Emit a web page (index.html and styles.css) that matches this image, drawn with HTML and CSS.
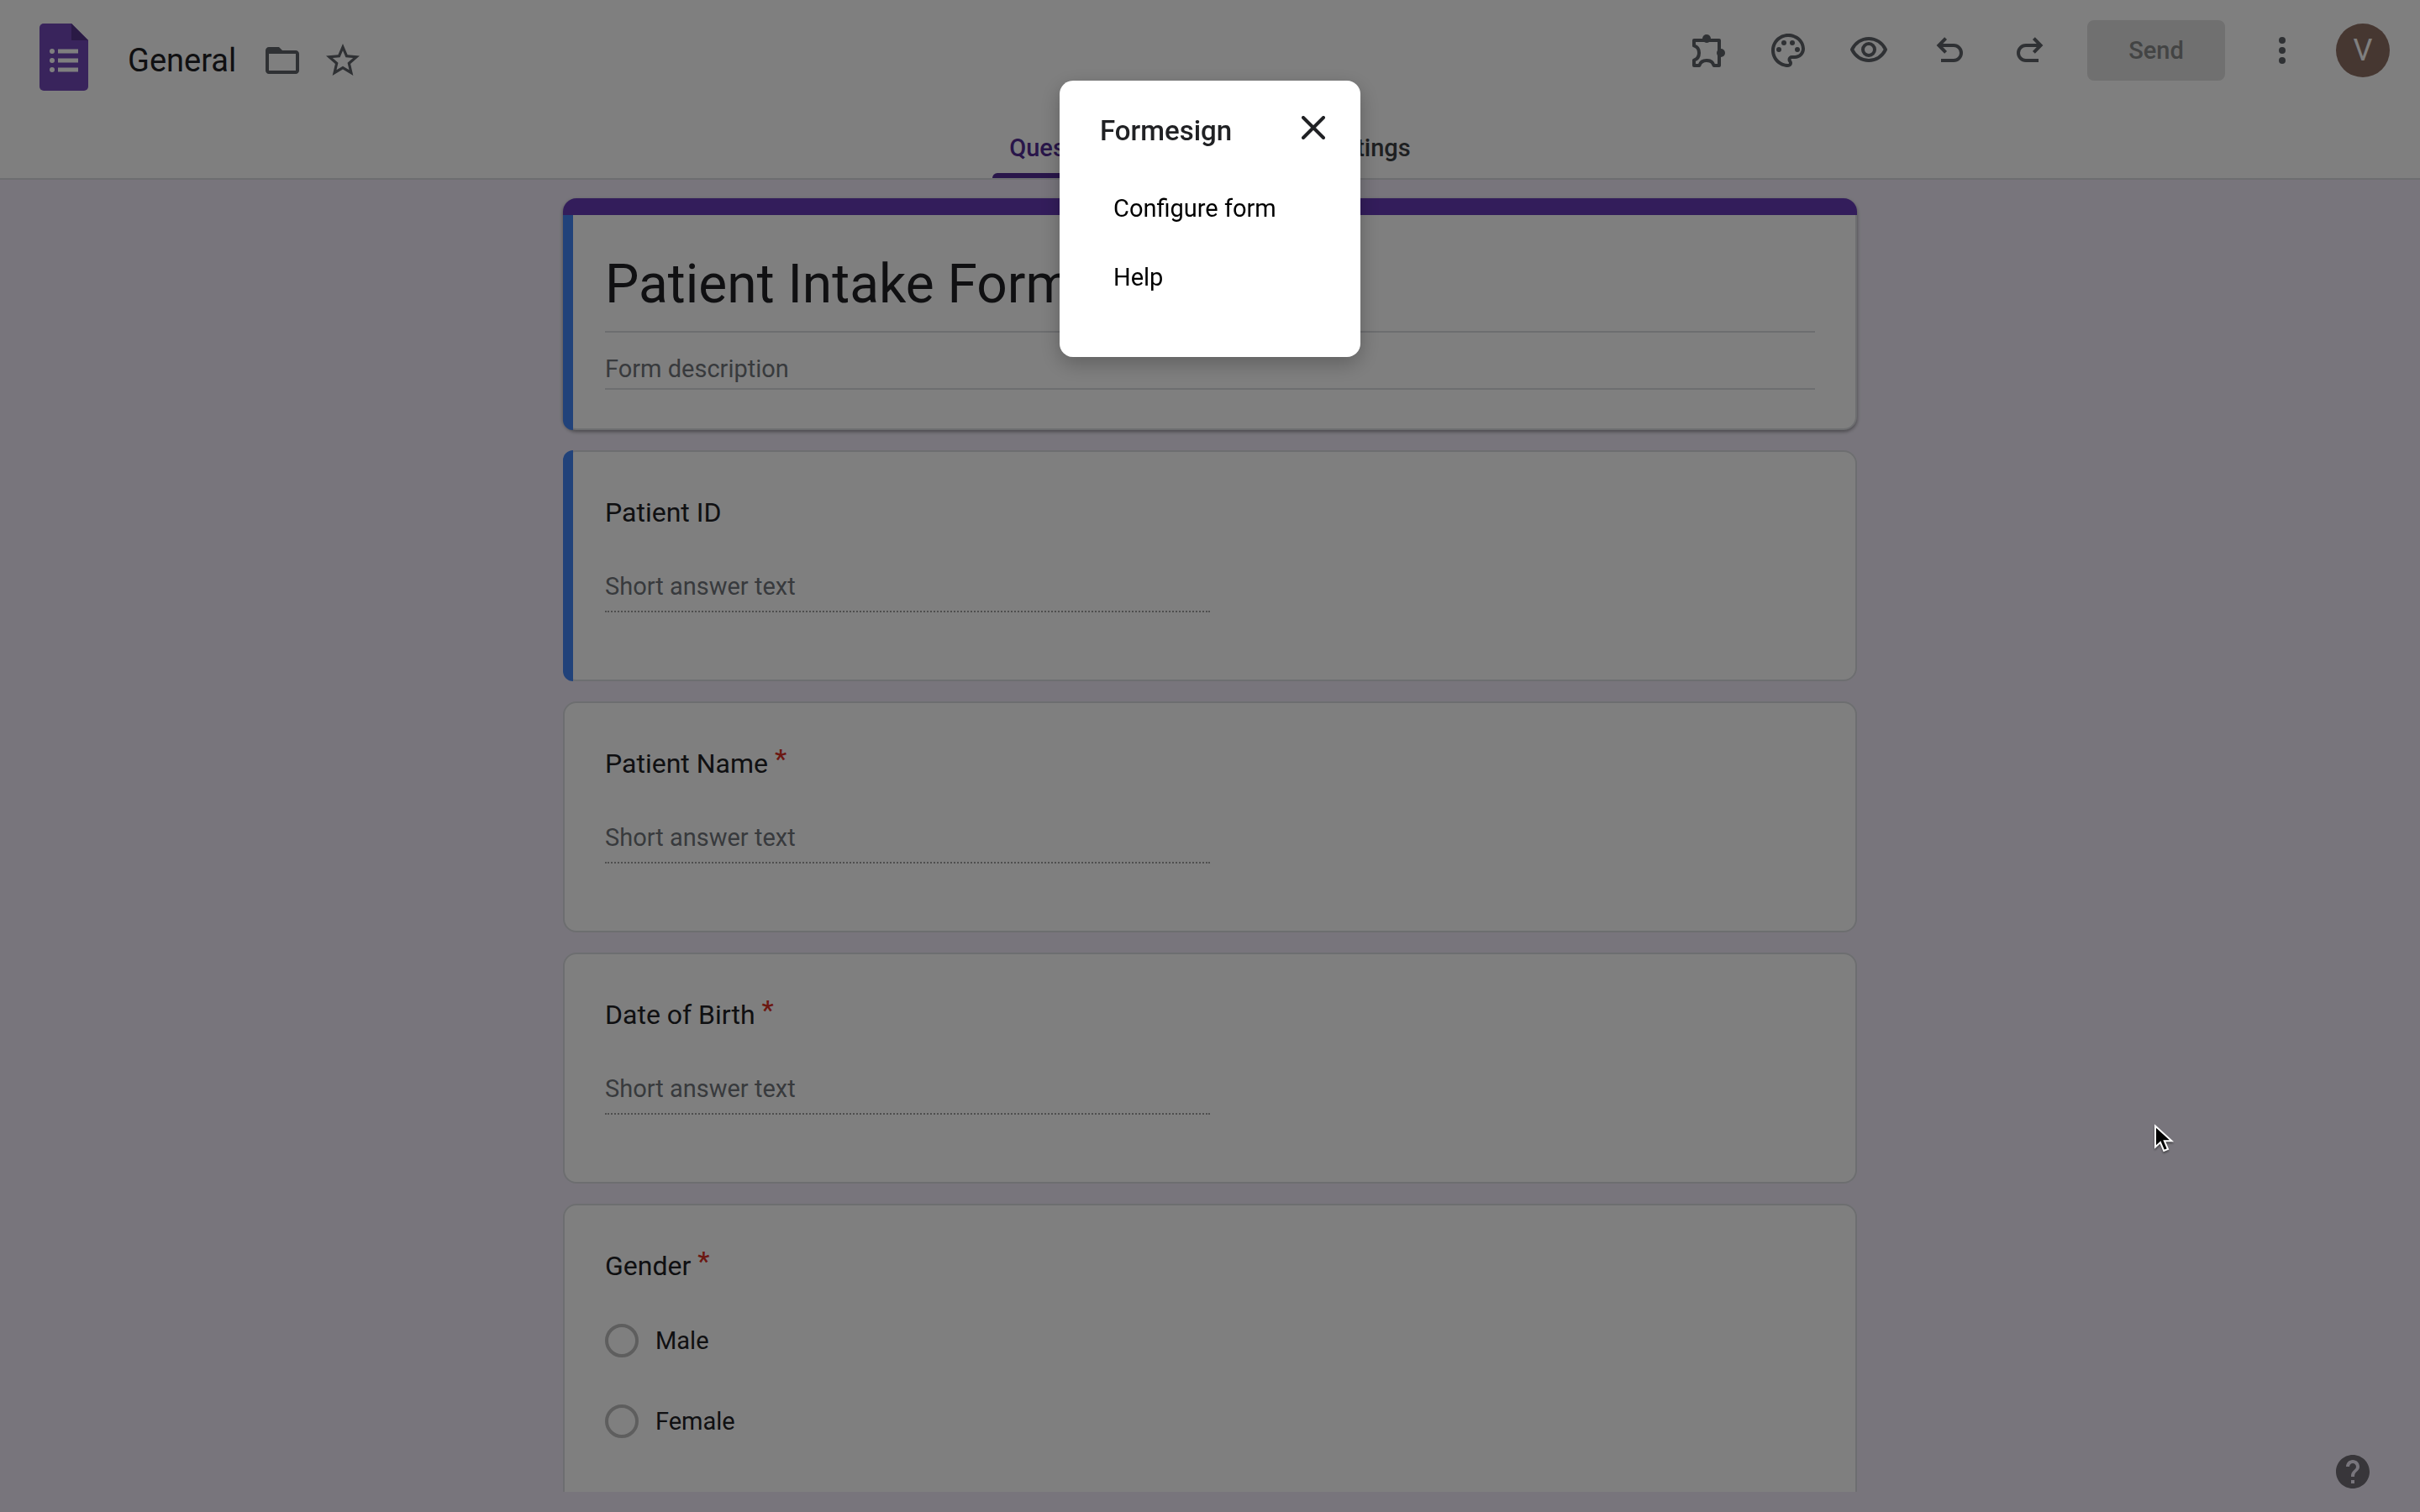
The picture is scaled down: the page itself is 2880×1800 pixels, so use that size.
FILE: index.html
```html
<!DOCTYPE html>
<html lang="en">

<head>
  <meta charset="UTF-8">
  <meta name="viewport" content="width=device-width, initial-scale=1.0">
  <title>General - Google Forms</title>
  <link rel="stylesheet" href="styles.css">
</head>

<body>
  <header class="header">
    <div class="top-bar">
      <div class="doc-info">
        <a href="#" class="logo" aria-label="Forms home">
          <svg width="58" height="80" viewBox="0 0 58 80">
            <path fill="#7248b9" d="M5 0h33l20 20v55a5 5 0 0 1-5 5H5a5 5 0 0 1-5-5V5a5 5 0 0 1 5-5z" />
            <path fill="#54348a" d="M38 0l20 20H38z" />
            <g fill="#fff">
              <circle cx="15" cy="33" r="3" />
              <circle cx="15" cy="44" r="3" />
              <circle cx="15" cy="55" r="3" />
              <path d="M22 30.500h24v5H22zM22 41.500h24v5H22zM22 52.500h24v5H22z" />
            </g>
          </svg>
        </a>
        <input type="text" class="doc-title" value="General" aria-label="Document title">
        <button class="small-btn" aria-label="Move to folder">
          <svg class="icon" viewBox="0 0 24 24">
            <path d="M9.170 4H4c-1.100 0-1.990.9-1.990 2L2 18c0 1.100.9 2 2 2h16c1.100 0 2-.9 2-2V8c0-1.100-.9-2-2-2h-8l-2-2zM4 8h16v10H4z" fill-rule="evenodd" />
          </svg>
        </button>
        <button class="small-btn" aria-label="Star">
          <svg class="icon" viewBox="0 0 24 24">
            <path d="M22 9.240l-7.190-.62L12 2 9.190 8.630 2 9.240l5.460 4.730L5.820 21 12 17.270 18.180 21l-1.630-7.030L22 9.240zM12 15.400l-3.760 2.270 1-4.280-3.320-2.880 4.380-.38L12 6.100l1.710 4.040 4.380.38-3.320 2.880 1 4.280L12 15.400z" />
          </svg>
        </button>
      </div>

      <div class="actions">
        <button class="icon-btn" aria-label="Add-ons">
          <svg class="icon" viewBox="0 0 24 24">
            <path class="line" stroke-linejoin="round" d="M4 6h15v15h-3.200c-.5-1.800-2-3-4.300-3s-3.800 1.200-4.300 3H4v-3.200c1.800-.5 3-2 3-4.300S5.800 9.700 4 9.200z" />
            <circle cx="11.500" cy="5" r="2.500" />
            <circle cx="20" cy="13.500" r="2.500" />
          </svg>
        </button>
        <button class="icon-btn" aria-label="Customize theme">
          <svg class="icon" viewBox="0 0 24 24">
            <path d="M12 22C6.490 22 2 17.510 2 12S6.490 2 12 2s10 4.040 10 9c0 3.310-2.690 6-6 6h-1.770c-.28 0-.5.22-.5.5 0 .12.05.23.13.33.41.47.64 1.060.64 1.670A2.500 2.500 0 0 1 12 22zm0-18c-4.410 0-8 3.590-8 8s3.590 8 8 8c.28 0 .5-.22.5-.5a.54.54 0 0 0-.14-.35c-.41-.46-.63-1.050-.63-1.650a2.500 2.500 0 0 1 2.500-2.500H16c2.210 0 4-1.790 4-4 0-3.860-3.590-7-8-7z" />
            <circle cx="6.500" cy="11.500" r="1.500" />
            <circle cx="9.500" cy="7.500" r="1.500" />
            <circle cx="14.500" cy="7.500" r="1.500" />
            <circle cx="17.500" cy="11.500" r="1.500" />
          </svg>
        </button>
        <button class="icon-btn" aria-label="Preview">
          <svg class="icon" viewBox="0 0 24 24">
            <path class="line" stroke-linejoin="round" d="M2 11.500C4 7.500 7.700 5 12 5s8 2.500 10 6.500c-2 4-5.700 6.500-10 6.500s-8-2.500-10-6.500z" />
            <circle class="line" cx="12" cy="11.500" r="3.500" />
          </svg>
        </button>
        <button class="icon-btn" aria-label="Undo">
          <svg class="icon" viewBox="0 0 24 24">
            <path class="line" d="M6 9h8.500a4.500 4.500 0 0 1 0 9H7M9.800 4.800L5.700 9l4.100 4.200" />
          </svg>
        </button>
        <button class="icon-btn" aria-label="Redo">
          <svg class="icon" viewBox="0 0 24 24">
            <path class="line" d="M18 9H9.500a4.500 4.500 0 0 0 0 9H17M14.200 4.800L18.300 9l-4.100 4.200" />
          </svg>
        </button>
        <button class="send-btn">Send</button>
        <button class="icon-btn" aria-label="More">
          <svg class="icon" viewBox="0 0 24 24">
            <circle cx="12" cy="6" r="2" />
            <circle cx="12" cy="12" r="2" />
            <circle cx="12" cy="18" r="2" />
          </svg>
        </button>
        <button class="avatar" aria-label="Account">V</button>
      </div>
    </div>

    <nav class="tabs">
      <a href="#" class="tab active">Questions</a>
      <a href="#" class="tab">Responses</a>
      <a href="#" class="tab">Settings</a>
    </nav>
  </header>

  <main class="form-area">
    <div class="form">
      <section class="card title-card selected">
        <input type="text" class="form-title" value="Patient Intake Form" aria-label="Form title">
        <input type="text" class="form-description" placeholder="Form description" aria-label="Form description">
      </section>

      <section class="card question selected">
        <label class="question-title" for="patient-id">Patient ID</label>
        <input type="text" class="short-answer" id="patient-id" placeholder="Short answer text">
      </section>

      <section class="card question">
        <label class="question-title" for="patient-name">Patient Name <span class="required">*</span></label>
        <input type="text" class="short-answer" id="patient-name" placeholder="Short answer text">
      </section>

      <section class="card question">
        <label class="question-title" for="birth-date">Date of Birth <span class="required">*</span></label>
        <input type="text" class="short-answer" id="birth-date" placeholder="Short answer text">
      </section>

      <section class="card question">
        <div class="question-title" id="gender-title">Gender <span class="required">*</span></div>
        <div class="options" role="radiogroup" aria-labelledby="gender-title">
          <label class="option"><input type="radio" name="gender"> Male</label>
          <label class="option"><input type="radio" name="gender"> Female</label>
        </div>
      </section>
    </div>
  </main>

  <button class="help-btn" aria-label="Help and feedback">
    <svg class="icon" viewBox="0 0 24 24">
      <path d="M12 2C6.480 2 2 6.480 2 12s4.480 10 10 10 10-4.480 10-10S17.520 2 12 2zm1 17h-2v-2h2v2zm2.070-7.750l-.9.920C13.450 12.900 13 13.500 13 15h-2v-.5c0-1.100.45-2.100 1.170-2.830l1.240-1.260c.37-.36.59-.86.59-1.410 0-1.100-.9-2-2-2s-2 .9-2 2H8c0-2.210 1.790-4 4-4s4 1.790 4 4c0 .88-.36 1.680-.93 2.250z" />
    </svg>
  </button>

  <div class="overlay">
    <div class="dialog" role="dialog" aria-labelledby="dialog-title">
      <div class="dialog-header">
        <h2 id="dialog-title">Formesign</h2>
        <button class="close-btn" aria-label="Close">
          <svg width="28" height="28" viewBox="0 0 28 28">
            <path d="M2 2l24 24M26 2L2 26" stroke="#202124" stroke-width="4" stroke-linecap="round" />
          </svg>
        </button>
      </div>
      <button class="menu-item">Configure form</button>
      <button class="menu-item">Help</button>
    </div>
  </div>

  <svg class="cursor" width="26" height="40" viewBox="0 0 26 40">
    <path d="M3 4.500v25l6-5.500 4.200 10 4.800-2-4.200-9.800h8.700z" fill="#000" stroke="#fff" stroke-width="2" />
  </svg>
</body>

</html>
```

FILE: styles.css
```css
* {
  box-sizing: border-box;
}

body {
  margin: 0;
  height: 100vh;
  display: flex;
  flex-direction: column;
  overflow: hidden;
  font-family: Roboto, Arial, sans-serif;
  color: #202124;
  background: #f0ebf8;
}

button,
input {
  font-family: inherit;
  color: inherit;
  border: none;
  padding: 0;
  background: transparent;
  outline: none;
}

button {
  cursor: pointer;
}

.icon {
  display: block;
  width: 48px;
  height: 48px;
  fill: #5f6368;
}

.line {
  fill: none;
  stroke: #5f6368;
  stroke-width: 2;
}

/* header */
.header {
  background: #fff;
  border-bottom: 2px solid #dadce0;
}

.top-bar {
  display: flex;
  justify-content: space-between;
  align-items: flex-start;
  padding: 12px 36px 0 47px;
}

.doc-info {
  display: flex;
  align-items: center;
  height: 120px;
}

.logo {
  padding-bottom: 8px;
}

.logo svg {
  display: block;
}

.doc-title {
  width: 148px;
  margin-left: 47px;
  font-size: 38px;
  line-height: 48px;
}

.small-btn {
  padding: 12px;
}

.actions {
  display: flex;
  align-items: center;
}

.icon-btn {
  padding: 24px;
}

.send-btn {
  width: 164px;
  height: 72px;
  margin: 0 20px;
  border-radius: 8px;
  background: #e0e0e0;
  color: #868889;
  font-size: 29px;
  font-weight: 500;
}

.avatar {
  width: 64px;
  height: 64px;
  margin-left: 16px;
  border-radius: 50%;
  background: #8d6e63;
  color: #fff;
  font-size: 36px;
}

.tabs {
  display: flex;
  justify-content: center;
  gap: 8px;
  margin-top: 24px;
}

.tab {
  padding: 0 20px;
  color: #3c4043;
  font-size: 29px;
  font-weight: 500;
  line-height: 40px;
  text-decoration: none;
}

.tab::after {
  content: "";
  display: block;
  height: 6px;
  margin: 10px -20px 0;
  border-radius: 6px 6px 0 0;
}

.tab.active {
  color: #522d94;
}

.tab.active::after {
  background: #522d94;
}

/* form */
.form-area {
  flex: 1;
  min-height: 0;
  margin-bottom: 24px;
  padding-top: 22px;
  overflow: hidden;
}

.form {
  display: flex;
  flex-direction: column;
  gap: 24px;
  width: 90%;
  max-width: 1540px;
  margin: 0 auto;
}

.card {
  position: relative;
  padding: 48px;
  border: 2px solid #dadce0;
  border-radius: 16px;
  background: #fff;
}

.selected::before {
  content: "";
  position: absolute;
  top: -2px;
  bottom: -2px;
  left: -2px;
  width: 12px;
  border-radius: 16px 0 0 16px;
  background: #4285f4;
}

.title-card {
  display: flex;
  flex-direction: column;
  padding-top: 52px;
  padding-bottom: 46px;
  box-shadow: 0 2px 4px rgba(0, 0, 0, 0.4);
}

.title-card::before {
  border-radius: 0 0 0 16px;
  top: 18px;
}

.title-card::after {
  content: "";
  position: absolute;
  top: -2px;
  left: -2px;
  right: -2px;
  height: 20px;
  border-radius: 16px 16px 0 0;
  background: #673ab7;
}

.form-title {
  height: 106px;
  padding-bottom: 8px;
  border-bottom: 2px solid #dadce0;
  font-size: 64px;
}

.form-description {
  height: 45px;
  margin-top: 23px;
  padding-bottom: 3px;
  border-bottom: 2px solid #dadce0;
  font-size: 29px;
}

::placeholder {
  color: #70757a;
  opacity: 1;
}

.question {
  padding-bottom: 80px;
}

.question-title {
  display: flex;
  gap: 8px;
  font-size: 32px;
  line-height: 48px;
}

.required {
  color: #d93025;
  font-weight: 500;
  line-height: 36px;
}

.short-answer {
  display: block;
  width: 50%;
  height: 51px;
  margin-top: 44px;
  padding-bottom: 9px;
  border-bottom: 2px dotted #9e9e9e;
  font-size: 29px;
}

.options {
  display: flex;
  flex-direction: column;
  gap: 56px;
  padding: 45px 0 40px;
}

.option {
  display: flex;
  align-items: center;
  gap: 20px;
  font-size: 29px;
  line-height: 40px;
}

.option input {
  appearance: none;
  width: 40px;
  height: 40px;
  margin: 0;
  border: 4px solid #bdbdbd;
  border-radius: 50%;
}

.help-btn {
  position: fixed;
  right: 56px;
  bottom: 24px;
}

.help-btn .icon {
  fill: #706d74;
}

/* add-on dialog */
.overlay {
  position: fixed;
  inset: 0;
  display: flex;
  justify-content: center;
  align-items: flex-start;
  padding-top: 96px;
  background: rgba(0, 0, 0, 0.5);
}

.dialog {
  display: flex;
  flex-direction: column;
  width: 358px;
  padding: 36px 42px 54px 48px;
  border-radius: 16px;
  background: #fff;
  box-shadow: 0 8px 24px rgba(0, 0, 0, 0.25);
}

.dialog-header {
  display: flex;
  justify-content: space-between;
  margin-bottom: 27px;
}

.dialog-header h2 {
  margin: 0;
  font-size: 33px;
  font-weight: 500;
  line-height: 48px;
}

.close-btn {
  height: 40px;
}

.close-btn svg {
  display: block;
}

.menu-item {
  padding: 16px;
  color: #000;
  font-size: 29px;
  line-height: 50px;
  text-align: left;
}

.cursor {
  position: fixed;
  top: 1336px;
  left: 2562px;
  filter: drop-shadow(0 2px 1px rgba(0, 0, 0, 0.4));
}
```
